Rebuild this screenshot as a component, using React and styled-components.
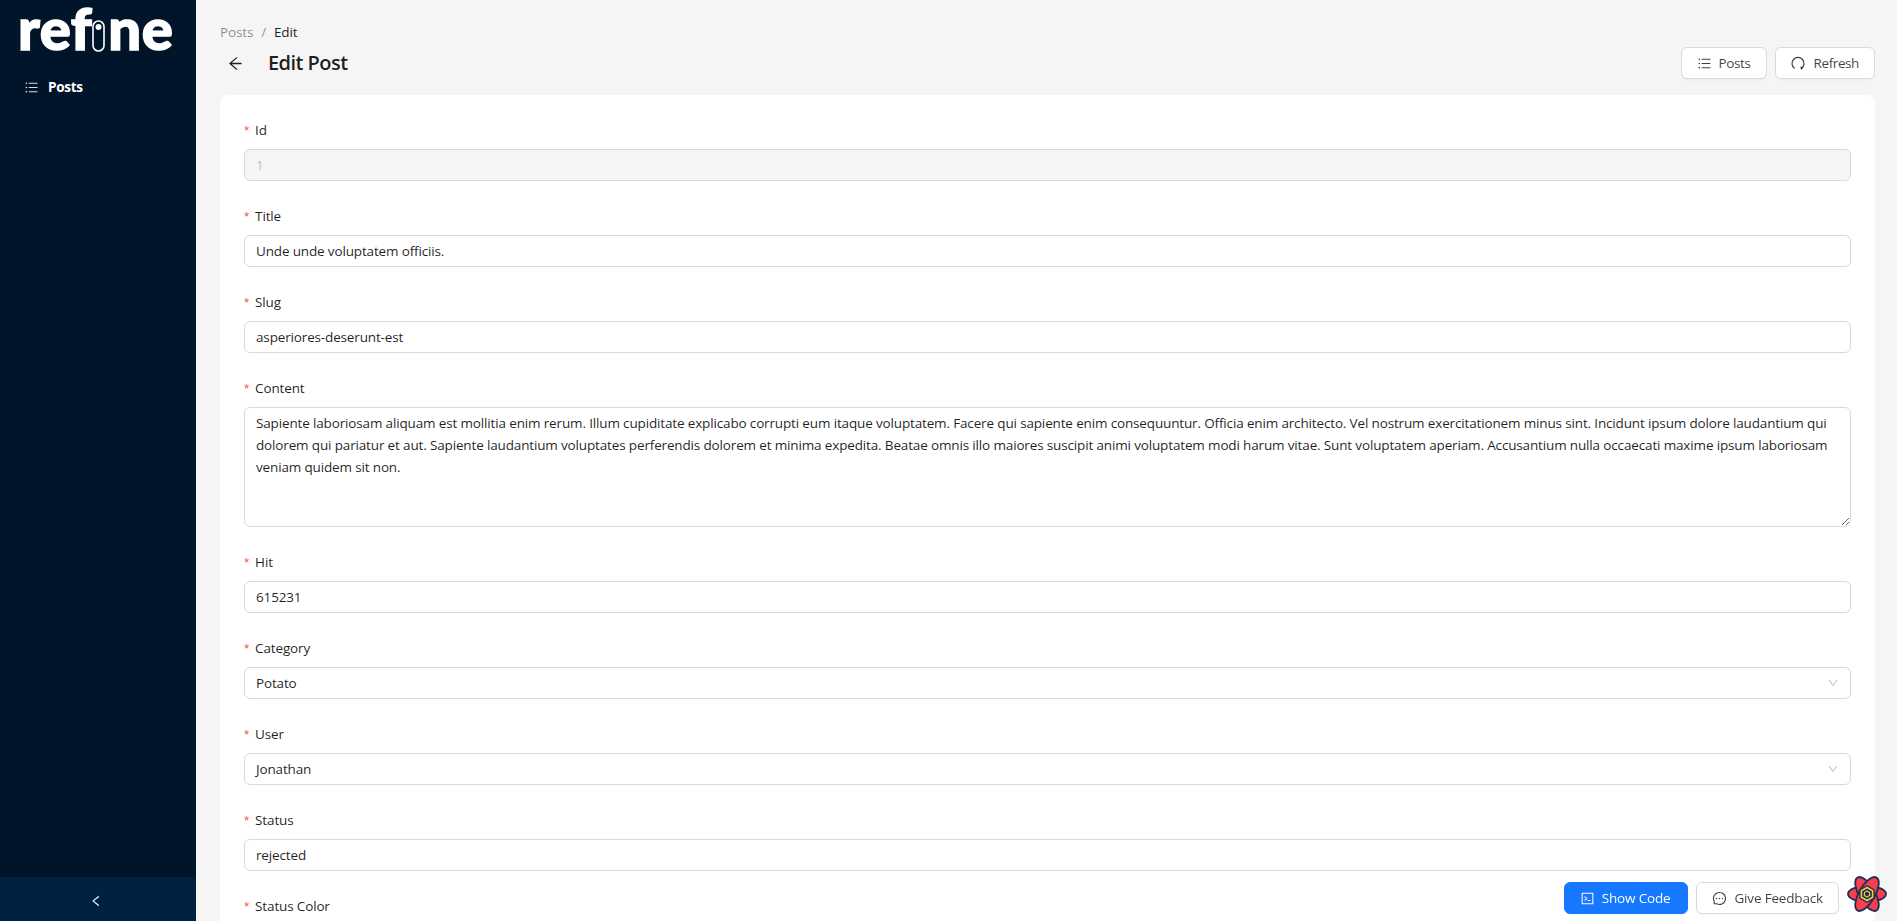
import React from 'react';
import styled, { createGlobalStyle } from 'styled-components';
import {
  AiOutlineUnorderedList,
  AiOutlineArrowLeft,
  AiOutlineLeft,
  AiOutlineDown,
  AiOutlineCode,
  AiOutlineMessage,
} from 'react-icons/ai';

const GlobalStyle = createGlobalStyle`
  html, body {
    margin: 0;
    height: 100%;
    overflow: hidden;
    font-family: "Open Sans", "Noto Sans", sans-serif;
    font-size: 13.5px;
    color: rgba(0, 0, 0, 0.88);
    background: #f5f5f5;
  }
  * { box-sizing: border-box; }
`;

const Layout = styled.div`
  display: flex;
  height: 921px;
  overflow: hidden;
`;
const Sider = styled.aside`
  width: 196px;
  flex: none;
  height: 100%;
  display: flex;
  flex-direction: column;
  background: #001529;
`;
const Logo = styled.div`
  height: 67px;
  padding: 0 0 0 18px;
  display: flex;
  align-items: flex-start;
  color: #fff;
  font-family: "Lato", sans-serif;
  font-weight: 900;
  font-size: 58px;
  line-height: 55px;
  letter-spacing: 0.5px;
  -webkit-text-stroke: 1.5px #fff;
`;
const LogoPill = styled.svg`
  width: 13px;
  height: 32px;
  margin: 19.5px 3px 0 0;
  flex: none;
`;
const Menu = styled.nav`
  flex: 1;
`;
const MenuItem = styled.a`
  height: 40px;
  padding-left: 24px;
  display: flex;
  align-items: center;
  gap: 9px;
  color: #fff;
  font-weight: 700;
  letter-spacing: -0.3px;
  cursor: pointer;
  svg { font-size: 15px; color: rgba(255, 255, 255, 0.85); }
`;
const Trigger = styled.button`
  height: 44px;
  border: none;
  padding: 4px 4px 0 0;
  background: #002140;
  color: #fff;
  display: flex;
  align-items: center;
  justify-content: center;
  font-size: 14px;
  cursor: pointer;
`;
const Main = styled.main`
  flex: 1;
  min-width: 0;
  padding: 21px 22px 0 24px;
`;
const Breadcrumb = styled.div`
  height: 22px;
  display: flex;
  align-items: center;
  gap: 8px;
  line-height: 22px;
  letter-spacing: -0.15px;
  color: rgba(0, 0, 0, 0.45);
`;
const Crumb = styled.span`
  color: ${(p) => (p.$current ? 'rgba(0, 0, 0, 0.88)' : 'rgba(0, 0, 0, 0.45)')};
`;
const PageHeader = styled.header`
  margin-top: 4px;
  height: 32px;
  display: flex;
  align-items: center;
`;
const BackButton = styled.button`
  border: none;
  background: none;
  padding: 0 0 0 7px;
  width: 48px;
  display: flex;
  align-items: center;
  font-size: 17px;
  color: rgba(0, 0, 0, 0.88);
  cursor: pointer;
`;
const Title = styled.h1`
  margin: 0;
  flex: 1;
  font-size: 20px;
  font-weight: 600;
  line-height: 32px;
  letter-spacing: -0.55px;
`;
const Actions = styled.div`
  display: flex;
  gap: 8px;
`;
const Button = styled.button`
  height: 32px;
  padding: ${(p) => (p.$primary ? '0 17px 0 15px' : '0 15px')};
  display: flex;
  align-items: center;
  gap: 7px;
  border: 1px solid ${(p) => (p.$primary ? '#1677ff' : '#d9d9d9')};
  border-radius: 6px;
  background: ${(p) => (p.$primary ? '#1677ff' : '#fff')};
  color: ${(p) => (p.$primary ? '#fff' : 'rgba(0, 0, 0, 0.75)')};
  box-shadow: 0 2px 0 rgba(0, 0, 0, 0.02);
  font-family: inherit;
  font-size: 13.5px;
  letter-spacing: -0.17px;
  cursor: pointer;
  svg { font-size: 15px; flex: none; }
`;
const HeaderButton = styled(Button)`
  letter-spacing: -0.4px;
`;
const RefreshGlyph = styled.svg`
  margin-right: 2px;
`;
const Card = styled.section`
  margin-top: 16px;
  padding: 24px;
  background: #fff;
  border-radius: 8px;
`;
const Field = styled.div`
  margin-bottom: 24px;
`;
const Label = styled.label`
  display: block;
  height: 22px;
  margin-bottom: 8px;
  line-height: 22px;
  letter-spacing: -0.15px;
  &::before {
    content: '*';
    display: inline-block;
    margin-right: 6px;
    color: #ff4d4f;
    font-family: "Liberation Sans", sans-serif;
  }
`;
const controlStyles = `
  display: block;
  width: 100%;
  border: 1px solid #d9d9d9;
  border-radius: 6px;
  padding: 4px 11px;
  font-family: inherit;
  font-size: 13.5px;
  line-height: 22px;
  letter-spacing: -0.15px;
  outline: none;
`;
const Input = styled.input`
  ${controlStyles}
  height: 32px;
  color: rgba(0, 0, 0, 0.88);
  background: #fff;
  &:disabled {
    color: rgba(0, 0, 0, 0.25);
    background: rgba(0, 0, 0, 0.04);
  }
`;
const TextArea = styled.textarea`
  ${controlStyles}
  height: 120px;
  color: rgba(0, 0, 0, 0.88);
  resize: vertical;
  white-space: pre-wrap;
`;
const Select = styled.div`
  ${controlStyles}
  height: 32px;
  display: flex;
  align-items: center;
  justify-content: space-between;
  svg { font-size: 12px; color: rgba(0, 0, 0, 0.25); }
`;
const FloatBar = styled.div`
  position: fixed;
  right: 10px;
  bottom: 7px;
  display: flex;
  align-items: flex-start;
  gap: 8px;
`;
const DevtoolsIcon = styled.svg`
  width: 40px;
  height: 36px;
  margin-top: -6px;
`;

const content =
  'Sapiente laboriosam aliquam est mollitia enim rerum. Illum cupiditate explicabo corrupti eum itaque voluptatem. Facere qui sapiente enim consequuntur. Officia enim architecto. Vel nostrum exercitationem minus sint. Incidunt ipsum dolore laudantium qui\n' +
  'dolorem qui pariatur et aut. Sapiente laudantium voluptates perferendis dolorem et minima expedita. Beatae omnis illo maiores suscipit animi voluptatem modi harum vitae. Sunt voluptatem aperiam. Accusantium nulla occaecati maxime ipsum laboriosam\n' +
  'veniam quidem sit non.';

function RefreshIcon() {
  return (
    <RefreshGlyph width="14" height="14" viewBox="0 0 14 14" fill="none" stroke="currentColor" strokeWidth="1.2">
      <path d="M3.6 12.4A6 6 0 1 1 10.4 12.4" />
      <path d="M10.4 10.7v2.2h-0.1" strokeWidth="1.6" />
    </RefreshGlyph>
  );
}

function Devtools() {
  return (
    <DevtoolsIcon viewBox="0 0 40 36">
      <g fill="#f93f4f" stroke="#1b2f55" strokeWidth="1.8">
        <ellipse cx="20" cy="18" rx="19" ry="8" />
        <ellipse cx="20" cy="18" rx="19" ry="8" transform="rotate(60 20 18)" />
        <ellipse cx="20" cy="18" rx="19" ry="8" transform="rotate(120 20 18)" />
      </g>
      <path d="M20 9l7.8 4.5v9L20 27l-7.8-4.5v-9z" fill="#1b2f55" />
      <path d="M20 11.5l5.6 3.2v6.6L20 24.5l-5.6-3.2v-6.6z" fill="none" stroke="#f5c842" strokeWidth="1.6" />
      <path d="M20 15l2.6 1.5v3L20 21l-2.6-1.5v-3z" fill="none" stroke="#f5c842" strokeWidth="1.2" />
    </DevtoolsIcon>
  );
}

function TextField({ label, value, disabled }) {
  return (
    <Field>
      <Label>{label}</Label>
      <Input defaultValue={value} disabled={disabled} readOnly={!disabled} />
    </Field>
  );
}

function SelectField({ label, value }) {
  return (
    <Field>
      <Label>{label}</Label>
      <Select>
        {value}
        <AiOutlineDown />
      </Select>
    </Field>
  );
}

export default function App() {
  return (
    <Layout>
      <GlobalStyle />
      <Sider>
        <Logo>
          <span>ref</span>
          <LogoPill viewBox="0 0 13 32">
            <rect x="1" y="1" width="11" height="30" rx="5.5" fill="none" stroke="#fff" strokeWidth="1.6" />
            <circle cx="6.5" cy="7" r="3" fill="#fff" />
          </LogoPill>
          <span>ne</span>
        </Logo>
        <Menu>
          <MenuItem>
            <AiOutlineUnorderedList />
            Posts
          </MenuItem>
        </Menu>
        <Trigger>
          <AiOutlineLeft />
        </Trigger>
      </Sider>
      <Main>
        <Breadcrumb>
          <Crumb>Posts</Crumb>
          <span>/</span>
          <Crumb $current>Edit</Crumb>
        </Breadcrumb>
        <PageHeader>
          <BackButton>
            <AiOutlineArrowLeft />
          </BackButton>
          <Title>Edit Post</Title>
          <Actions>
            <HeaderButton>
              <AiOutlineUnorderedList />
              Posts
            </HeaderButton>
            <HeaderButton>
              <RefreshIcon />
              Refresh
            </HeaderButton>
          </Actions>
        </PageHeader>
        <Card>
          <TextField label="Id" value="1" disabled />
          <TextField label="Title" value="Unde unde voluptatem officiis." />
          <TextField label="Slug" value="asperiores-deserunt-est" />
          <Field>
            <Label>Content</Label>
            <TextArea defaultValue={content} readOnly />
          </Field>
          <TextField label="Hit" value="615231" />
          <SelectField label="Category" value="Potato" />
          <SelectField label="User" value="Jonathan" />
          <TextField label="Status" value="rejected" />
          <TextField label="Status Color" value="" />
        </Card>
      </Main>
      <FloatBar>
        <Button $primary>
          <AiOutlineCode />
          Show Code
        </Button>
        <Button>
          <AiOutlineMessage />
          Give Feedback
        </Button>
        <Devtools />
      </FloatBar>
    </Layout>
  );
}
